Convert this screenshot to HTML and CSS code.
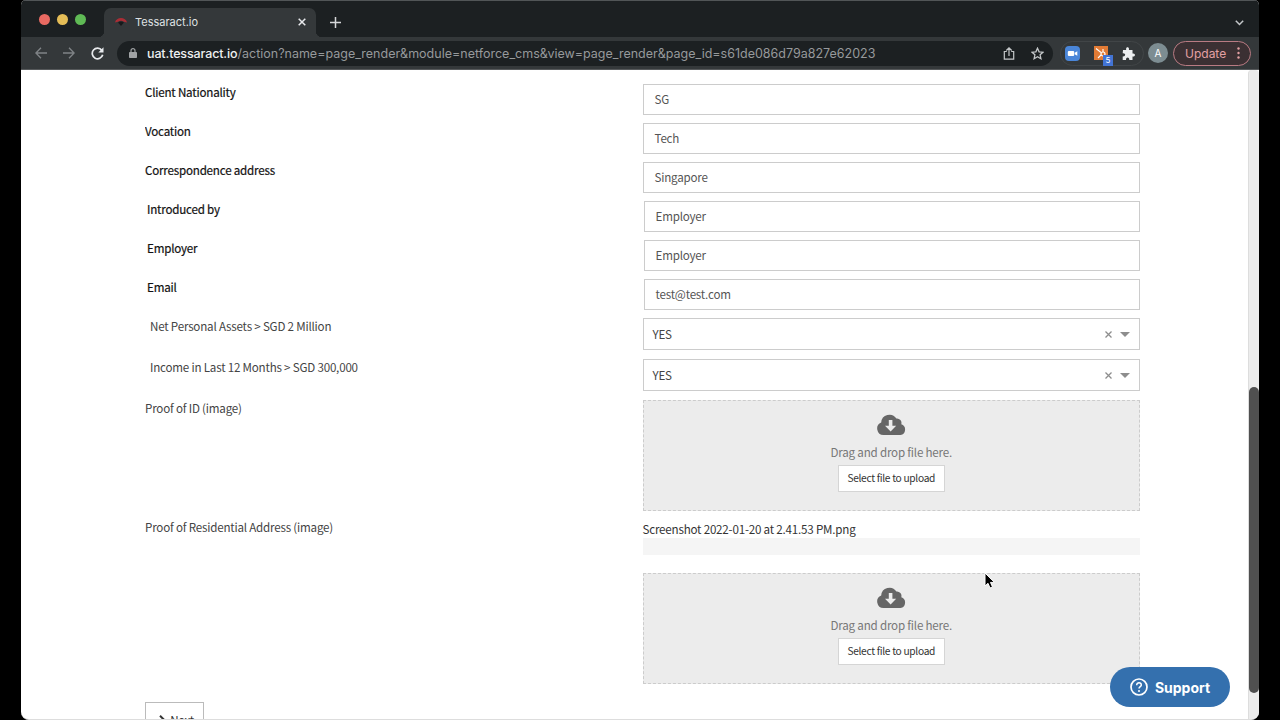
FILE: index.html
```
<!DOCTYPE html>
<html lang="en">
<head>
    <meta charset="UTF-8">
    <meta name="viewport" content="width=device-width, initial-scale=1.0">
    <title>Tessaract.io</title>
    <link rel="stylesheet" href="styles.css">
</head>
<body>
    <div class="window">
        <div class="tab-bar">
            <div class="lights">
                <span class="light red"></span>
                <span class="light yellow"></span>
                <span class="light green"></span>
            </div>
            <div class="tab">
                <svg class="favicon" width="12" height="12" viewBox="0 0 12 12"><path d="M0 6.5C1 0.500 11 0.500 12 6.500L9 5.800Q6 3.500 3 5.800Z" fill="#a92d35"/><path d="M3 6.500Q6 4.500 9 6.500L6 10Z" fill="#18191b"/></svg>
                <span class="tab-title">Tessaract.io</span>
                <svg class="tab-close" width="8" height="8" viewBox="0 0 8 8"><path d="M.7.7l6.600 6.600M7.300.7L.7 7.300" stroke="#e8eaed" stroke-width="1.500"/></svg>
            </div>
            <svg class="new-tab" width="11" height="11" viewBox="0 0 11 11"><path d="M5.500 0v11M0 5.500h11" stroke="#d5d7d9" stroke-width="1.500"/></svg>
            <svg class="tab-search" width="9" height="6" viewBox="0 0 9 6"><path d="M.8.8L4.500 4.500 8.200.8" fill="none" stroke="#c4c7c9" stroke-width="1.500"/></svg>
        </div>

        <div class="toolbar">
            <div class="nav">
                <svg width="12" height="12" viewBox="0 0 12 12"><path d="M12 6H1.200M6 .8L.9 6 6 11.200" fill="none" stroke="#7f8386" stroke-width="1.300"/></svg>
                <svg width="12" height="12" viewBox="0 0 12 12"><path d="M0 6h10.800M6 .8L11.100 6 6 11.200" fill="none" stroke="#7f8386" stroke-width="1.300"/></svg>
                <svg width="13" height="13" viewBox="0 0 13 13"><path d="M10.800 3.300A5.300 5.300 0 1 0 11.700 7.800" fill="none" stroke="#e8eaed" stroke-width="1.700"/><path d="M12.500.3v5.200H7.300z" fill="#e8eaed"/></svg>
            </div>
            <div class="address">
                <svg class="lock" width="8" height="10" viewBox="0 0 8 10"><path d="M2 4.500V2.700a2 2 0 0 1 4 0v1.800" fill="none" stroke="#a0a3a5" stroke-width="1.200"/><rect y="3.900" width="8" height="6.100" rx=".8" fill="#a0a3a5"/></svg>
                <span class="url"><span class="host">uat.tessaract.io</span><span class="path">/action?name=page_render&amp;module=netforce_cms&amp;view=page_render&amp;page_id=s61de086d79a827e62023</span></span>
                <svg class="share" width="12" height="13" viewBox="0 0 12 13"><path d="M3.800 4.500H1.300v7.700h9.400V4.500H8.200M6 9V1M3.300 3.500L6 .9l2.700 2.600" fill="none" stroke="#c5c8ca" stroke-width="1.200"/></svg>
                <svg class="star" width="13" height="13" viewBox="0 0 13 13"><path d="M6.500 1.200l1.600 3.600 3.900.4-2.900 2.600.8 3.900-3.400-2-3.400 2 .8-3.900L1 5.200l3.900-.4z" fill="none" stroke="#c5c8ca" stroke-width="1.300"/></svg>
            </div>
            <div class="extensions">
                <svg width="15" height="15" viewBox="0 0 15 15"><rect width="15" height="15" rx="4" fill="#4a86d9"/><rect x="2.800" y="5" width="6.400" height="5" rx="1" fill="#fff"/><path d="M9.700 6.800l2.600-1.600v4.600L9.700 8.200z" fill="#fff"/></svg>
                <div class="hub">
                    <svg width="14" height="14" viewBox="0 0 14 14"><rect width="14" height="14" fill="#e27b35"/><path d="M2 2.500l5 4M9 3v3M7 9l-3 3" stroke="#fff" stroke-width="1.100"/><circle cx="9" cy="8" r="2" fill="none" stroke="#fff" stroke-width="1.200"/></svg>
                    <span class="badge">5</span>
                </div>
                <svg width="13" height="13" viewBox="0 0 13 13"><path d="M1 3h3.200C3.300-.8 7.700-.8 6.900 3H10.500v3.500c3.300-.8 3.300 3.700 0 3V13H7.300c.3-3.300-3.700-3.300-3.300 0H.7V9.500C4 9.800 4 5.900.7 6.300z" fill="#eceef0"/></svg>
            </div>
            <span class="avatar">A</span>
            <div class="update"><span>Update</span><svg width="3" height="12" viewBox="0 0 3 12"><g fill="#e3a0a3"><circle cx="1.500" cy="1.500" r="1.200"/><circle cx="1.500" cy="6" r="1.200"/><circle cx="1.500" cy="10.500" r="1.200"/></g></svg></div>
        </div>

        <div class="page">
            <div class="form">
                <div class="row"><label>Client Nationality</label><div class="input">SG</div></div>
                <div class="row"><label>Vocation</label><div class="input">Tech</div></div>
                <div class="row"><label>Correspondence address</label><div class="input">Singapore</div></div>
                <div class="row shifted"><label>Introduced by</label><div class="input">Employer</div></div>
                <div class="row shifted"><label>Employer</label><div class="input">Employer</div></div>
                <div class="row shifted"><label>Email</label><div class="input">test@test.com</div></div>
                <div class="row choice">
                    <label>Net Personal Assets &gt; SGD 2 Million</label>
                    <div class="select"><span class="value">YES</span><svg width="7" height="7" viewBox="0 0 7 7"><path d="M.5.5l6 6M6.500.5l-6 6" stroke="#8d8d8d" stroke-width="1.300"/></svg><span class="caret"></span></div>
                </div>
                <div class="row choice">
                    <label>Income in Last 12 Months &gt; SGD 300,000</label>
                    <div class="select"><span class="value">YES</span><svg width="7" height="7" viewBox="0 0 7 7"><path d="M.5.5l6 6M6.500.5l-6 6" stroke="#8d8d8d" stroke-width="1.300"/></svg><span class="caret"></span></div>
                </div>
                <div class="row upload">
                    <label>Proof of ID (image)</label>
                    <div class="dropzone">
                        <svg class="cloud" width="29" height="21" viewBox="0 0 29 21"><path d="M6.500 21A6.500 6.500 0 0 1 4.200 8.500 8.300 8.300 0 0 1 19.400 4.500 4.500 4.500 0 0 1 24.300 10.200 5.600 5.600 0 0 1 23.500 21Z" fill="#666"/><path d="M11.800 6h3.600v5.700h3.800L13.600 17.600 8 11.700h3.800z" fill="#ececec"/></svg>
                        <p>Drag and drop file here.</p>
                        <button>Select file to upload</button>
                    </div>
                </div>
                <div class="row upload">
                    <label>Proof of Residential Address (image)</label>
                    <div>
                        <p class="filename">Screenshot 2022-01-20 at 2.41.53 PM.png</p>
                        <div class="progress"></div>
                        <div class="dropzone">
                            <svg class="cloud" width="29" height="21" viewBox="0 0 29 21"><path d="M6.500 21A6.500 6.500 0 0 1 4.200 8.500 8.300 8.300 0 0 1 19.400 4.500 4.500 4.500 0 0 1 24.300 10.200 5.600 5.600 0 0 1 23.500 21Z" fill="#666"/><path d="M11.800 6h3.600v5.700h3.800L13.600 17.600 8 11.700h3.800z" fill="#ececec"/></svg>
                            <p>Drag and drop file here.</p>
                            <button>Select file to upload</button>
                        </div>
                    </div>
                </div>
                <button class="next"><svg width="11" height="10" viewBox="0 0 11 10"><path d="M0 5h9M5 .8L9.300 5 5 9.200" fill="none" stroke="#333" stroke-width="2"/></svg>Next</button>
            </div>
            <div class="scrollbar"><div class="thumb"></div></div>
        </div>

        <div class="support">
            <svg width="18" height="18" viewBox="0 0 18 18"><circle cx="9" cy="9" r="8" fill="none" stroke="#fff" stroke-width="1.700"/><path d="M6.700 7.200C6.700 3.900 11.500 4.200 11.300 7.100 11.200 8.700 9 8.700 9 10.600" fill="none" stroke="#fff" stroke-width="1.500"/><circle cx="9" cy="12.900" r="1" fill="#fff"/></svg>
            <span>Support</span>
        </div>
        <svg class="cursor" width="12" height="18" viewBox="0 0 12 18"><path d="M1 1v13l3-2.700 2 4.700 2.500-1-2-4.600h4z" fill="#000" stroke="#fff" stroke-width="1"/></svg>
    </div>
</body>
</html>
```
FILE: styles.css
```
* {
    margin: 0;
    padding: 0;
    box-sizing: border-box;
}

body {
    background: #000;
    height: 720px;
    overflow: hidden;
    font-family: 'Noto Sans CJK SC', 'Noto Sans', sans-serif;
}

svg {
    display: block;
    flex: none;
}

.window {
    position: relative;
    width: 1238px;
    height: 720px;
    margin-left: 21px;
    display: flex;
    flex-direction: column;
    background: #fff;
    border-bottom: 1px solid #ddd;
    border-radius: 5px 5px 8px 8px;
    overflow: hidden;
}

/* browser chrome */
.tab-bar {
    height: 37px;
    background: #1c2022;
    border-top: 1px solid #515557;
    display: flex;
    align-items: flex-end;
    font-family: Inter, sans-serif;
}

.lights {
    display: flex;
    gap: 7px;
    width: 83px;
    padding: 0 0 12px 18px;
}

.light {
    width: 11px;
    height: 11px;
    border-radius: 50%;
}

.red { background: #e96a62; }
.yellow { background: #e5bd57; }
.green { background: #5fba55; }

.tab {
    position: relative;
    width: 212px;
    height: 29px;
    padding: 0 10px 1px 11px;
    border-radius: 7px 7px 0 0;
    background: #34383a;
    display: flex;
    align-items: center;
}

.tab::before,
.tab::after {
    content: "";
    position: absolute;
    bottom: 0;
    width: 6px;
    height: 6px;
}

.tab::before {
    left: -6px;
    background: radial-gradient(circle at 0 0, transparent 6px, #34383a 6.5px);
}

.tab::after {
    right: -6px;
    background: radial-gradient(circle at 100% 0, transparent 6px, #34383a 6.5px);
}

.tab-title {
    flex: 1;
    margin-left: 8px;
    font-size: 11px;
    color: #dfe1e3;
}

.new-tab {
    margin: 0 auto 9px 14px;
}

.tab-search {
    margin: 0 15px 11px 0;
}

.toolbar {
    height: 33px;
    background: #34383a;
    border-bottom: 1px solid #56595b;
    display: flex;
    align-items: center;
    font-family: Inter, sans-serif;
}

.nav {
    width: 96px;
    padding-left: 14px;
    display: flex;
    align-items: center;
    gap: 16px;
}

.address {
    width: 936px;
    height: 25px;
    padding: 0 9px 0 12px;
    border-radius: 13px;
    background: #1c2022;
    display: flex;
    align-items: center;
}

.url {
    flex: 1;
    margin-left: 10px;
    font-size: 12.5px;
    white-space: nowrap;
    color: #96999b;
}

.host {
    color: #eef0f1;
    font-weight: 500;
    letter-spacing: -0.13px;
}

.star {
    margin-left: 16px;
}

.extensions {
    width: 84px;
    height: 25px;
    margin-left: 7px;
    padding-left: 4px;
    border: 1px solid #414547;
    border-radius: 13px;
    display: flex;
    align-items: center;
    gap: 14px;
}

.hub {
    position: relative;
}

.badge {
    position: absolute;
    left: 9px;
    top: 9px;
    width: 10px;
    height: 11px;
    background: #4274d4;
    color: #fff;
    font-size: 8px;
    line-height: 11px;
    text-align: center;
}

.avatar {
    width: 20px;
    height: 20px;
    margin-left: 4px;
    border-radius: 50%;
    background: #7d8d92;
    color: #fff;
    font-size: 10px;
    line-height: 20px;
    text-align: center;
}

.update {
    width: 78px;
    height: 25px;
    margin-left: 5px;
    padding: 0 10px 0 11px;
    border: 1px solid #b97b83;
    border-radius: 13px;
    background: #3b3033;
    color: #e3a0a3;
    font-size: 12px;
    display: flex;
    align-items: center;
    justify-content: space-between;
}

/* page */
.page {
    flex: 1;
    min-height: 0;
    display: flex;
    justify-content: space-between;
}

.form {
    width: 995px;
    height: 649px;
    margin-left: 124px;
    padding-top: 14px;
    overflow: hidden;
}

.row {
    display: grid;
    grid-template-columns: 497.5px 497.5px;
    align-items: start;
    margin-bottom: 8px;
    font-size: 11.6px;
    letter-spacing: -0.2px;
}

.row label {
    line-height: 17px;
    color: #111;
    -webkit-text-stroke: 0.2px #111;
}

.row.shifted {
    grid-template-columns: 496.5px 496.5px;
    padding-left: 2px;
}

.input {
    height: 31px;
    padding-left: 11px;
    border: 1px solid #ccc;
    line-height: 29px;
    color: #555;
}

.choice {
    margin-bottom: 9px;
}

.choice label {
    padding-left: 5px;
}

.choice label,
.upload label {
    color: #444;
    -webkit-text-stroke: 0;
}

.select {
    height: 32px;
    padding: 0 9px;
    border: 1px solid #ccc;
    display: flex;
    align-items: center;
    color: #444;
}

.value {
    flex: 1;
}

.caret {
    margin-left: 8px;
    border: 5px solid transparent;
    border-top-color: #8d8d8d;
    border-bottom: 0;
}

.dropzone {
    height: 111px;
    padding-top: 13px;
    border: 1px dashed #ccc;
    background: #ececec;
    display: flex;
    flex-direction: column;
    align-items: center;
}

.dropzone p {
    margin-top: 7px;
    line-height: 20px;
    color: #777;
}

.dropzone button {
    width: 107px;
    height: 27px;
    margin-top: 3px;
    padding-bottom: 2px;
    border: 1px solid #d5d5d5;
    background: #fff;
    color: #333;
    font: 400 10.2px 'Noto Sans CJK SC', 'Noto Sans', sans-serif;
    letter-spacing: -0.3px;
}

.filename {
    padding-top: 1px;
    line-height: 18px;
    color: #333;
}

.progress {
    height: 17px;
    margin-bottom: 18px;
    background: #f5f5f5;
}

.next {
    width: 59px;
    height: 35px;
    margin-top: 18px;
    border: 1px solid #bbb;
    background: #fff;
    color: #333;
    font: 400 11.6px 'Noto Sans CJK SC', 'Noto Sans', sans-serif;
    letter-spacing: -0.2px;
    display: flex;
    align-items: center;
    justify-content: center;
    gap: 4px;
}

.scrollbar {
    width: 11px;
    padding-top: 317px;
    background: #ececec;
    border-left: 1px solid #ddd;
    border-radius: 4px 4px 0 0;
}

.thumb {
    height: 306px;
    border-radius: 5px;
    background: #505050;
}

/* floating help button */
.support {
    position: absolute;
    right: 29px;
    bottom: 12px;
    width: 120px;
    height: 40px;
    border-radius: 20px;
    background: #3470ae;
    color: #fff;
    font: 700 14px Inter, sans-serif;
    display: flex;
    align-items: center;
    justify-content: center;
    gap: 7px;
}

.cursor {
    position: absolute;
    left: 963px;
    top: 572px;
}
```
